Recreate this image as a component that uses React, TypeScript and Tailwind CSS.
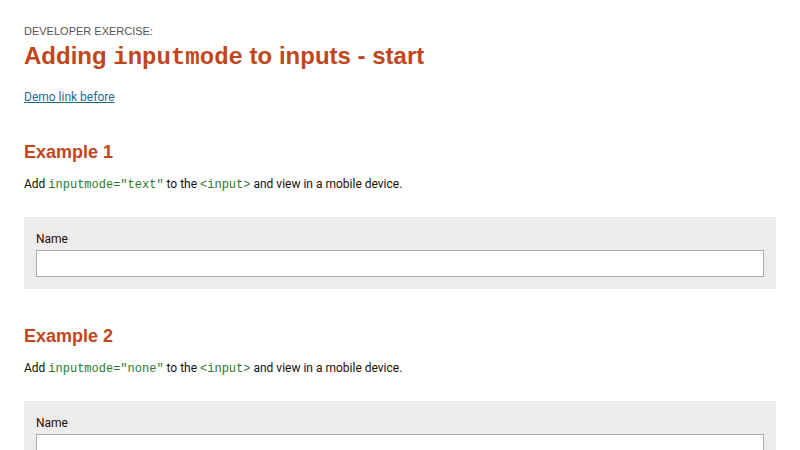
import React from "react";

const Code = ({ children }: { children: React.ReactNode }) => (
  <code className="font-['Liberation_Mono',monospace] text-[12px] text-[#2b7a2b]">{children}</code>
);

const Example = ({ n, mode, first }: { n: number; mode: string; first?: boolean }) => (
  <section className={first ? "mt-[33px]" : "mt-[36px]"}>
    <h2 className="font-['Liberation_Sans',Arial,sans-serif] text-[18px] leading-[22px] font-bold text-[#c2461b]">
      Example {n}
    </h2>
    <p className="mt-[11px] text-[12px] leading-[20px] text-[#111]">
      Add <Code>inputmode="{mode}"</Code> to the <Code>&lt;input&gt;</Code> and view in a mobile device.
    </p>
    <div className="mt-[22px] bg-[#edebeb] px-[12px] py-[12px]">
      <label className="block text-[12px] leading-[20px] text-[#111]">Name</label>
      <input type="text" className="mt-[1px] block h-[27px] w-full border border-[#aaa] bg-white" />
    </div>
  </section>
);

export default function App() {
  return (
    <div className="min-h-[450px] bg-white px-[24px] pt-[24px] font-['Roboto',sans-serif]">
      <p className="font-['Liberation_Sans',Arial,sans-serif] text-[11px] leading-[14px] uppercase text-[#555]">
        Developer exercise:
      </p>
      <h1 className="mt-[3px] font-['Liberation_Sans',Arial,sans-serif] text-[24px] leading-[30px] font-bold text-[#c2461b]">
        Adding <code className="font-['Liberation_Mono',monospace]">inputmode</code> to inputs - start
      </h1>
      <a href="#" className="mt-[16px] inline-block text-[12px] leading-[16px] text-[#1f6a8c] underline">
        Demo link before
      </a>
      <Example n={1} mode="text" first />
      <Example n={2} mode="none" />
    </div>
  );
}
